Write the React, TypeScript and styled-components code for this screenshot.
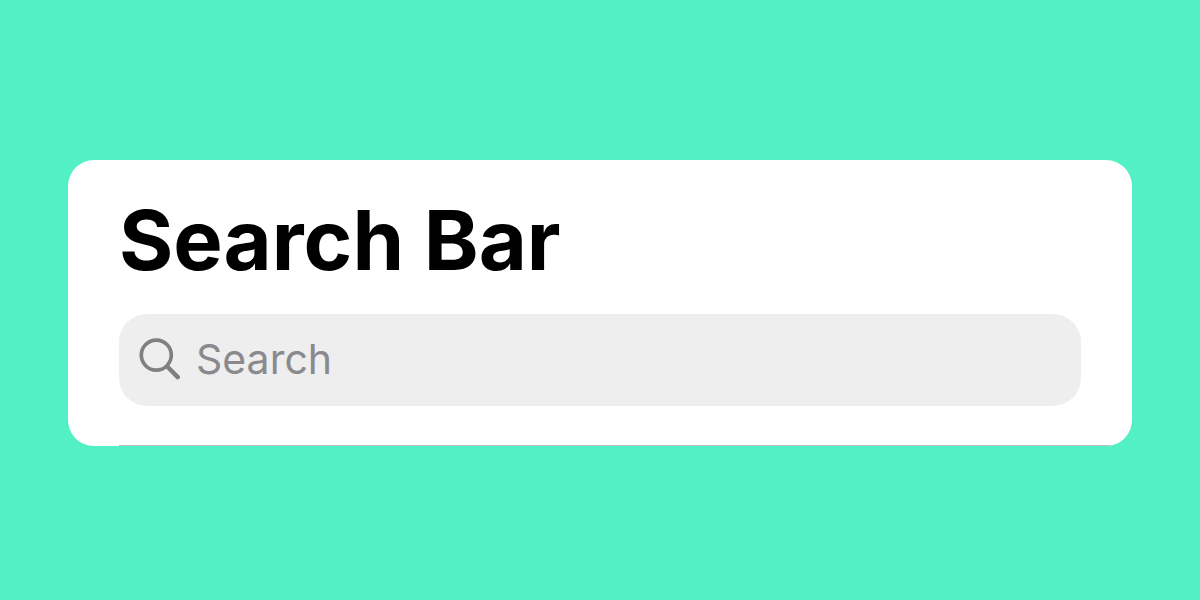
import React from "react";
import styled, { createGlobalStyle } from "styled-components";

const GlobalStyle = createGlobalStyle`
  * { box-sizing: border-box; }
  body { margin: 0; background: #54f0c5; font-family: Inter, "Liberation Sans", sans-serif; }
`;

const Page = styled.main`
  min-height: 100vh;
  padding: 160px 68px;
`;

const Card = styled.section`
  overflow: hidden;
  background: #fff;
  border-radius: 26px;
  padding: 28px 0 0 51px;
`;

const Title = styled.h1`
  margin: 0 0 22px;
  font-size: 83px;
  line-height: 104px;
  font-weight: 700;
  color: #000;
`;

const SearchField = styled.label`
  display: flex;
  align-items: center;
  gap: 16px;
  height: 92px;
  margin-right: 51px;
  padding: 0 20px;
  border-radius: 28px;
  background: #eeeeee;
`;

const SearchIcon = styled.svg`
  flex: none;
  width: 41px;
  height: 44px;
`;

const SearchInput = styled.input`
  flex: 1;
  min-width: 0;
  padding: 0 0 2px;
  border: 0;
  outline: 0;
  background: transparent;
  font: 400 41px/52px Inter, "Liberation Sans", sans-serif;
  color: #000;
  &::placeholder { color: #8a8a8e; opacity: 1; }
`;

const Divider = styled.hr`
  height: 1px;
  margin: 39px 0 0;
  border: 0;
  background: #b8bdbc;
`;

export default function App() {
  return (
    <Page>
      <GlobalStyle />
      <Card>
        <Title>Search Bar</Title>
        <SearchField>
          <SearchIcon viewBox="0 0 41 44" fill="none" stroke="#808083" strokeLinecap="round" aria-hidden="true">
            <circle cx="17.3" cy="17.1" r="15" strokeWidth="3.7" />
            <path d="M28.3 28.5 38.7 39.1" strokeWidth="4.5" />
          </SearchIcon>
          <SearchInput type="search" placeholder="Search" aria-label="Search" />
        </SearchField>
        <Divider />
      </Card>
    </Page>
  );
}
